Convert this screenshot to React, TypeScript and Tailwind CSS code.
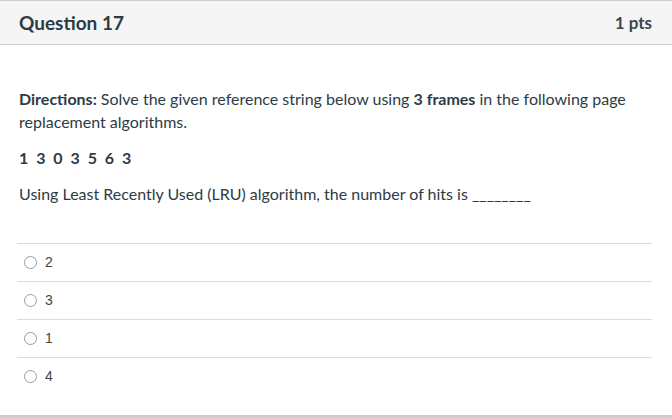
import React from 'react';

const answers = ['2', '3', '1', '4'];

const Radio: React.FC = () => (
  <span className="inline-block w-[13px] h-[13px] rounded-full border border-[#9a9a9a] bg-white" />
);

export default function App() {
  return (
    <div
      className="w-[672px] h-[417px] bg-white text-[#2d3b45] border-t border-b-2 border-[#c7cdd1] overflow-hidden"
      style={{ fontFamily: 'Lato, "Open Sans", sans-serif' }}
    >
      {/* header */}
      <div className="h-[44px] bg-[#f5f5f5] border-b border-[#c7cdd1] flex items-center justify-between pl-[19px] pr-[20px]">
        <h2 className="text-[19px] font-bold leading-none">Question 17</h2>
        <span className="text-[17px] font-bold text-[#3d464d] leading-none">1 pts</span>
      </div>

      <div className="pt-[42px] pl-[19px] pr-[20px] text-[16px] leading-[23px]">
        <p>
          <strong>Directions:</strong> Solve the given reference string below using <strong>3 frames</strong> in the
          following page replacement algorithms.
        </p>
        <p className="mt-[13px] font-bold tracking-[0.5px] [word-spacing:3px]">1 3 0 3 5 6 3</p>
        <p className="mt-[13px]">
          Using Least Recently Used (LRU) algorithm, the number of hits is ________
        </p>
      </div>

      <div className="mt-[38px] ml-[17px] mr-[20px]">
        {answers.map((a) => (
          <div key={a} className="h-[38px] border-t border-[#dcdcdc] flex items-center pl-[7px] gap-[8px]">
            <Radio />
            <span className="text-[14px] text-[#444]" style={{ fontFamily: '"Liberation Sans", Arial, sans-serif' }}>
              {a}
            </span>
          </div>
        ))}
      </div>
    </div>
  );
}
